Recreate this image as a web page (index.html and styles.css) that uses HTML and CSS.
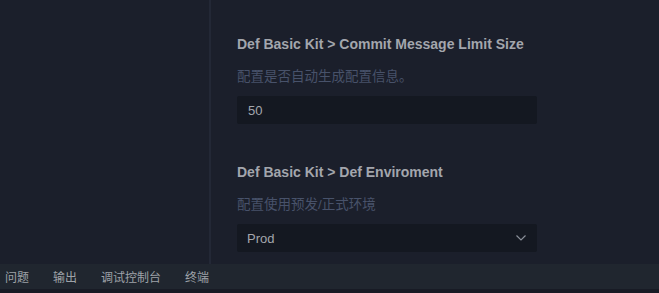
FILE: index.html
```html
<!DOCTYPE html>
<html lang="zh-CN">
<head>
<meta charset="utf-8">
<link rel="stylesheet" href="styles.css">
</head>
<body>
<div class="app">
  <div class="main">
    <div class="sidebar"></div>
    <div class="settings">
      <div class="setting">
        <div class="title">Def Basic Kit &gt; Commit Message Limit Size</div>
        <div class="desc">配置是否自动生成配置信息。</div>
        <div class="input">50</div>
      </div>
      <div class="setting">
        <div class="title">Def Basic Kit &gt; Def Enviroment</div>
        <div class="desc">配置使用预发/正式环境</div>
        <div class="select">
          <span>Prod</span>
          <svg class="chev" width="12" height="8" viewBox="0 0 12 8"><path d="M1.5 1.5 L6 6 L10.5 1.5" fill="none" stroke="#8a8f99" stroke-width="1.2"/></svg>
        </div>
      </div>
    </div>
  </div>
  <div class="panel">
    <span class="tab">问题</span>
    <span class="tab">输出</span>
    <span class="tab">调试控制台</span>
    <span class="tab">终端</span>
  </div>
  <div class="status"></div>
</div>
</body>
</html>
```
FILE: styles.css
```css
html, body {
  margin: 0;
  padding: 0;
  background: #1b1f2b;
}
.app {
  width: 659px;
  height: 293px;
  display: flex;
  flex-direction: column;
  font-family: "Liberation Sans", "Noto Sans CJK SC", sans-serif;
  overflow: hidden;
}
.main {
  height: 264px;
  display: flex;
  overflow: hidden;
}
.sidebar {
  width: 209px;
  border-right: 2px solid #232836;
  background: #1b1f2b;
}
.settings {
  flex: 1;
  padding: 36px 0 0 26px;
}
.setting {
  margin-bottom: 40px;
}
.title {
  font-size: 14px;
  font-weight: bold;
  color: #a3a6ad;
  line-height: 16px;
}
.desc {
  margin-top: 15px;
  font-size: 13.5px;
  color: #48526a;
  line-height: 19px;
}
.input, .select {
  margin-top: 10px;
  width: 300px;
  height: 28px;
  box-sizing: border-box;
  background: #141821;
  border-radius: 2px;
  color: #a3a6ad;
  font-size: 13px;
  display: flex;
  align-items: center;
}
.input {
  padding-left: 11px;
}
.select {
  padding: 0 10px;
  justify-content: space-between;
}
.panel {
  height: 25px;
  background: #20262f;
  display: flex;
  align-items: center;
  padding-left: 5px;
  gap: 24px;
  font-size: 12px;
  color: #9ea2a8;
}
.status {
  flex: 1;
  background: #181b25;
}
```
